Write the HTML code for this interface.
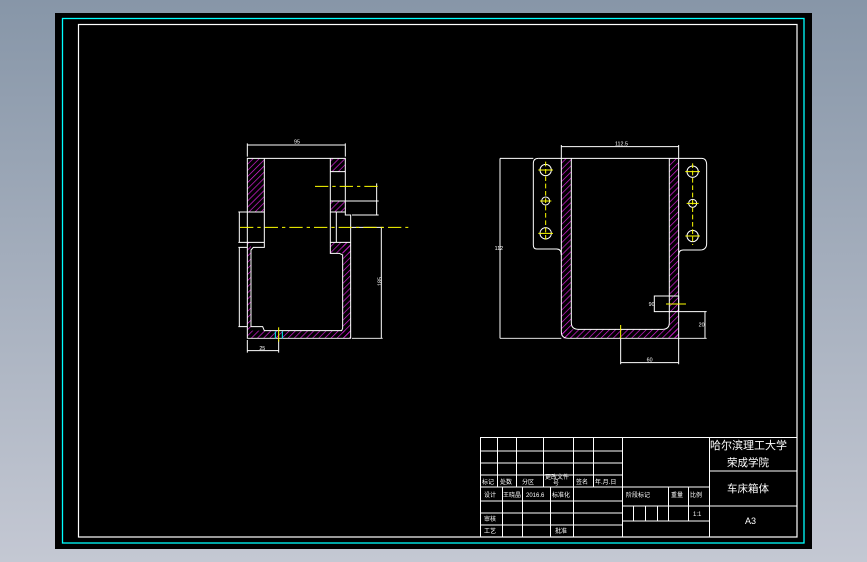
<!DOCTYPE html>
<html><head><meta charset="utf-8"><style>
html,body{margin:0;padding:0}
body{width:867px;height:562px;overflow:hidden;background:linear-gradient(#8796a8,#c4c8d3);position:relative;font-family:"Liberation Sans","Noto Sans CJK SC",sans-serif}
svg{position:absolute;left:0;top:0}
</style></head><body>
<svg width="867" height="562" viewBox="0 0 867 562">
<defs>
<pattern id="h" patternUnits="userSpaceOnUse" width="13" height="13" patternTransform="rotate(45)">
<line x1="0" y1="0" x2="0" y2="13" stroke="#e020e0" stroke-width="4"/>
</pattern>
</defs>
<rect x="55" y="13" width="757" height="536" fill="#000"/>
<rect x="62.5" y="18.5" width="741.5" height="524.5" fill="none" stroke="#00ffff" stroke-width="1.3"/>
<rect x="78.5" y="24.5" width="718.5" height="512.5" fill="none" stroke="#fff" stroke-width="1.2"/>

<!-- left drawing -->
<g transform="translate(220,130) scale(0.3333)" fill="none" stroke="#fff" stroke-width="3">
<rect x="82" y="85" width="51" height="161" fill="url(#h)" stroke="none"/>
<rect x="331" y="85" width="45" height="40" fill="url(#h)" stroke="none"/>
<rect x="331" y="213" width="45" height="33" fill="url(#h)" stroke="none"/>
<rect x="331" y="337" width="61" height="33" fill="url(#h)" stroke="none"/>
<rect x="368" y="337" width="24" height="288" fill="url(#h)" stroke="none"/>
<rect x="82" y="602" width="310" height="23" fill="url(#h)" stroke="none"/>
<rect x="82" y="337" width="11" height="265" fill="url(#h)" stroke="none"/>
<path d="M82 45H376M82 40V80M376 40V80"/>
<path d="M82 85H376V255H392V625H82Z"/>
<path d="M133 85V352H100L93 360V590H128L133 602H365L368 595V375L358 370H331V85"/>
<path d="M82 246H133M82 337H133M331 125H376M331 213H476M331 246H376M349 246V337M331 337H392M396 255H476"/>
<path d="M55 246H82M55 337H82M55 352H82M55 590H82M58 246V337M58 352V590"/>
<path d="M396 292H488M396 625H488M484 292V625M470 160V255"/>
<path d="M82 630V668M176 630V668M82 662H176"/>
<path d="M285 169H480M60 292H565" stroke="#ff0" stroke-dasharray="40 12 10 12"/>
<path d="M176 592V635" stroke="#ff0"/>
<path d="M166 604V625M187 604V625" stroke="#0ff"/>
<g fill="#fff" stroke="none" font-size="16">
<text x="222" y="40">95</text>
<text x="118" y="660">25</text>
<text x="462" y="475" transform="rotate(-90 470 460)">185</text>
</g>
</g>

<!-- right drawing -->
<g transform="translate(490,130) scale(0.3333)" fill="none" stroke="#fff" stroke-width="3">
<rect x="214" y="85" width="30" height="540" fill="url(#h)" stroke="none"/>
<rect x="538" y="85" width="28" height="540" fill="url(#h)" stroke="none"/>
<rect x="214" y="598" width="352" height="27" fill="url(#h)" stroke="none"/>
<path d="M214 50H566M214 45V85M566 45V85"/>
<path d="M214 85V605Q214 625 235 625H566V85"/>
<path d="M244 85V578Q244 598 265 598H518Q538 598 538 578V85"/>
<path d="M145 85H635Q650 85 650 105V340Q650 360 630 360H580Q566 360 566 375"/>
<path d="M214 375Q214 357 200 357H140Q130 357 130 345V100Q130 85 145 85"/>
<path d="M30 85H130M30 625H214M30 85V625"/>
<path d="M493 498H566V545H493ZM566 545H650M566 625H650M645 545V625"/>
<path d="M392 625V703M566 625V703M392 698H566"/>
<circle cx="167" cy="120" r="17"/><circle cx="167" cy="213" r="12"/><circle cx="167" cy="310" r="17"/>
<circle cx="608" cy="125" r="17"/><circle cx="608" cy="220" r="12"/><circle cx="608" cy="318" r="17"/>
<g stroke="#ff0">
<path d="M145 120H189M145 310H189M150 213H184M586 125H630M586 318H630M590 220H626M528 522H588M392 585V625"/>
<path d="M167 95V335M608 100V345" stroke-dasharray="14 8"/>
</g>
<g fill="#fff" stroke="none" font-size="16">
<text x="375" y="47">112.5</text>
<text x="470" y="694">60</text>
<text x="626" y="590">20</text>
<text x="14" y="360">112</text>
<text x="476" y="528">90</text>
</g>
</g>

<!-- title block -->
<g stroke="#fff" stroke-width="1" fill="none" shape-rendering="crispEdges">
<rect x="480.5" y="437.5" width="316.5" height="99.5"/>
<path d="M480 451H622M480 463H622M480 475H622M480 487H709M480 501H622M480 513H622M480 525H622"/>
<path d="M497.5 437V487M516.5 437V487M543.5 437V487M573.5 437V537M593.5 437V487M622.5 437V537"/>
<path d="M502.5 487V537M522.5 487V537M550.5 487V537"/>
<path d="M709.5 437V537M709 471H797M709 506H797M622 506H709M622 521H709"/>
<path d="M633.5 506V521M645.5 506V521M657.5 506V521M668.5 487V521M688.5 487V521"/>
</g>
<g fill="#fff" font-size="6">
<text x="482" y="484">标记</text><text x="500" y="484">处数</text><text x="522" y="484">分区</text><text x="545" y="479">更改文件</text><text x="553" y="485">号</text><text x="576" y="484">签名</text><text x="595" y="484">年.月.日</text>
<text x="484" y="497">设计</text><text x="503" y="497">王晓晶</text><text x="526" y="497">2016.6</text><text x="552" y="497">标准化</text>
<text x="484" y="521">审核</text><text x="484" y="533">工艺</text><text x="555" y="533">批准</text>
<text x="626" y="497">阶段标记</text><text x="671" y="497">重量</text><text x="690" y="497">比例</text><text x="693" y="516">1:1</text>
</g>
<g fill="#fff" font-size="10.5">
<text x="710" y="449" font-size="11">哈尔滨理工大学</text>
<text x="727" y="466">荣成学院</text>
<text x="727" y="492">车床箱体</text>
<text x="745" y="524" font-size="9">A3</text>
</g>
</svg>
</body></html>
